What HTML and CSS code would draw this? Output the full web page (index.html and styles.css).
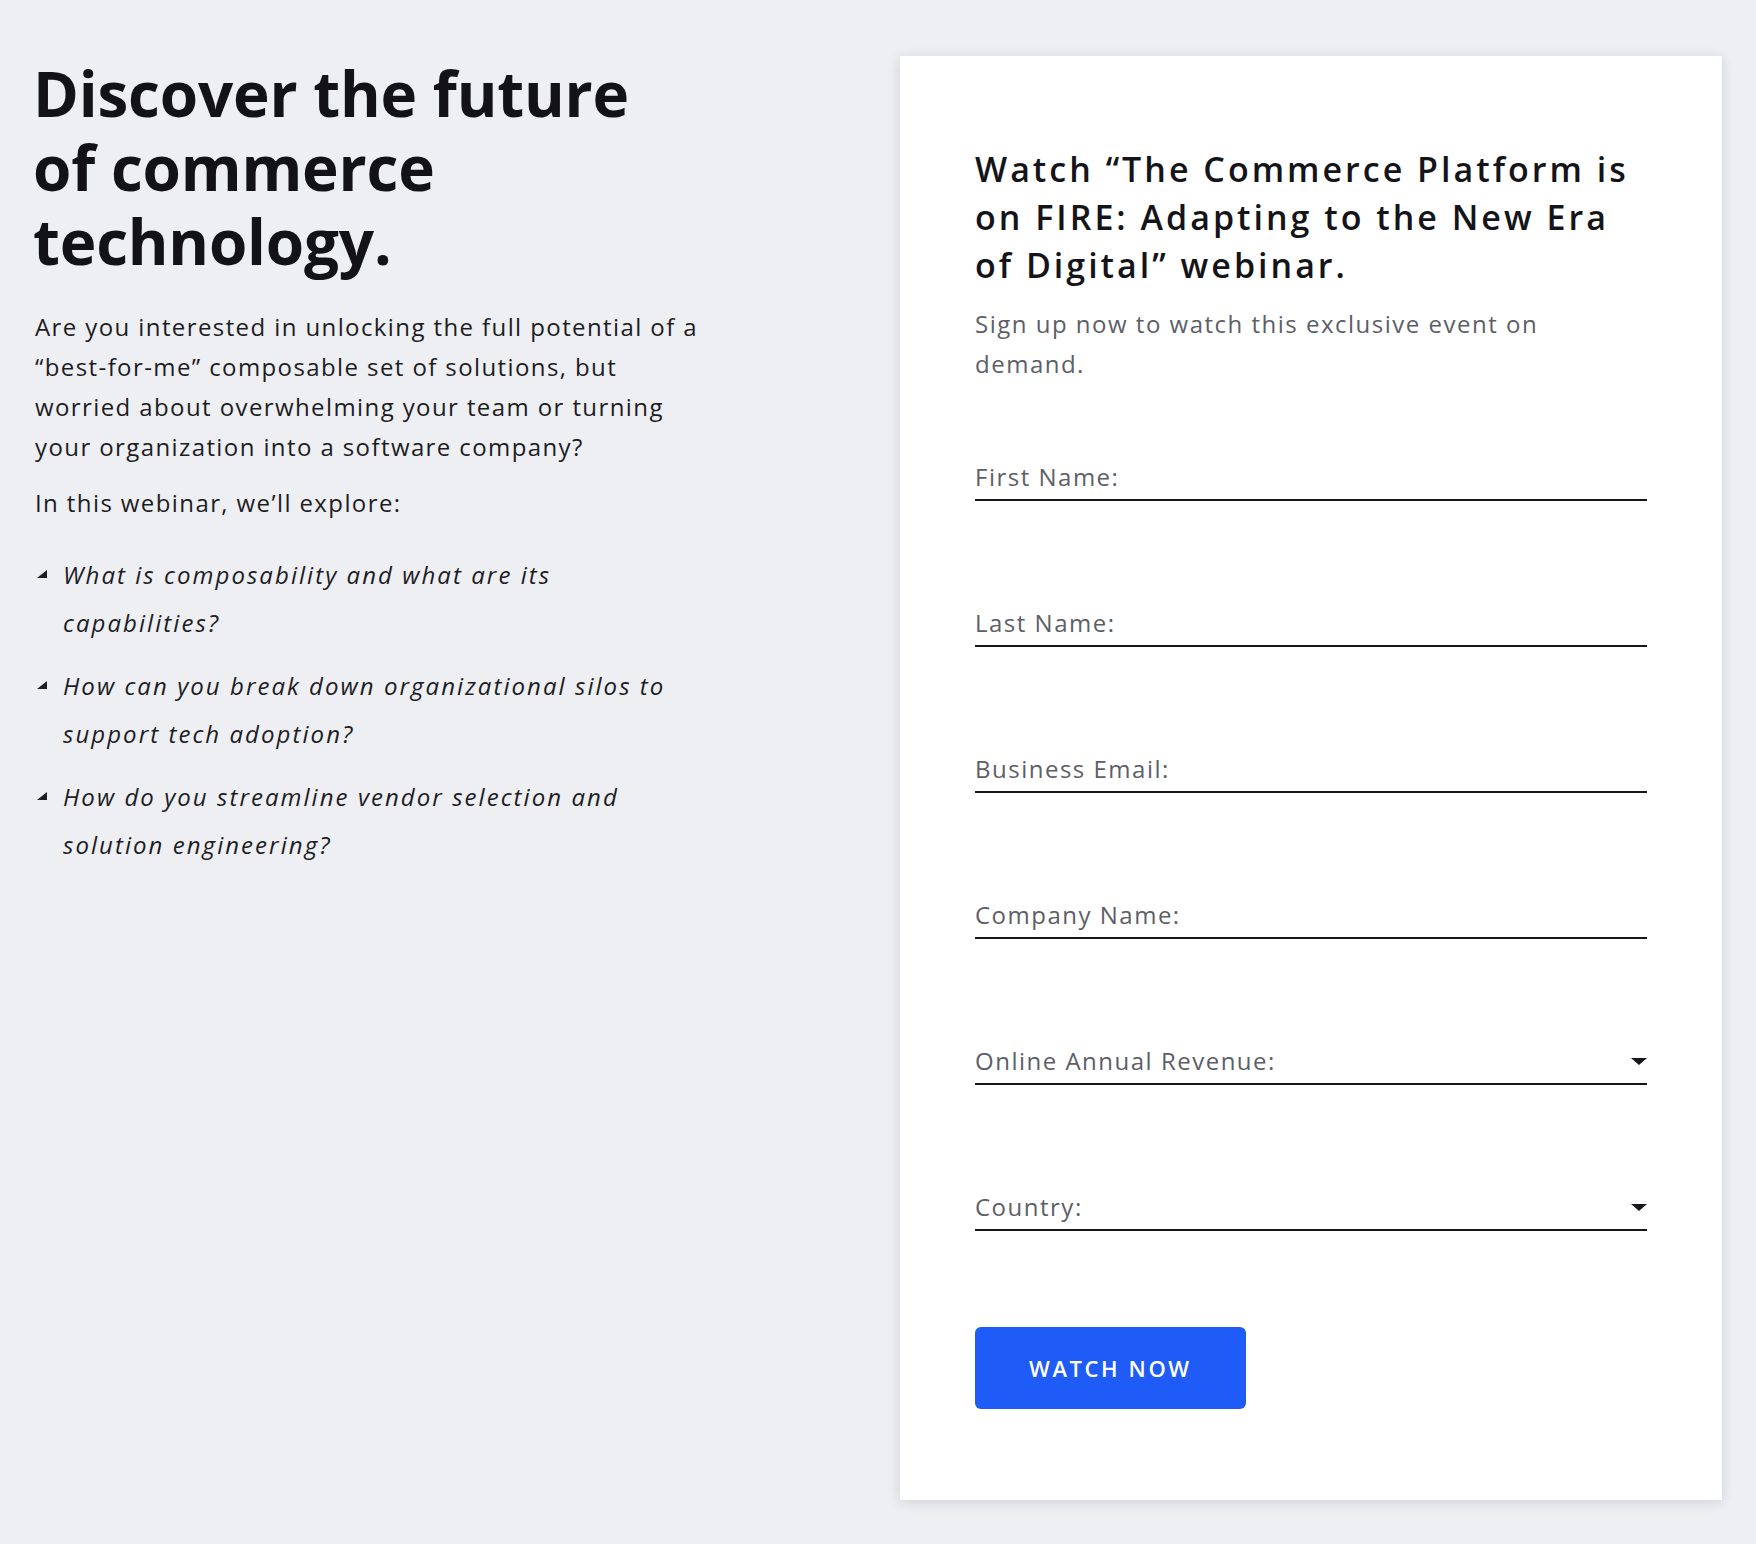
FILE: index.html
```html
<!DOCTYPE html>
<html lang="en">
<head>
<meta charset="utf-8">
<title>Discover the future of commerce technology</title>
<link rel="stylesheet" href="styles.css">
</head>
<body>
<main class="page">
  <section class="intro">
    <h1 class="intro-title">Discover the future of commerce technology.</h1>
    <p class="intro-text">Are you interested in unlocking the full potential of a “best-for-me” composable set of solutions, but worried about overwhelming your team or turning your organization into a software company?</p>
    <p class="intro-text intro-lead">In this webinar, we’ll explore:</p>
    <ul class="topics">
      <li class="topic"><svg class="topic-mark" viewBox="0 0 10 8" aria-hidden="true"><polygon points="10,0 10,8 0,8"/></svg>What is composability and what are its capabilities?</li>
      <li class="topic"><svg class="topic-mark" viewBox="0 0 10 8" aria-hidden="true"><polygon points="10,0 10,8 0,8"/></svg>How can you break down organizational silos to support tech adoption?</li>
      <li class="topic"><svg class="topic-mark" viewBox="0 0 10 8" aria-hidden="true"><polygon points="10,0 10,8 0,8"/></svg>How do you streamline vendor selection and solution engineering?</li>
    </ul>
  </section>

  <section class="card">
    <h2 class="card-title">Watch “The Commerce Platform is on FIRE: Adapting to the New Era of Digital” webinar.</h2>
    <p class="card-sub">Sign up now to watch this exclusive event on demand.</p>
    <form class="form">
      <div class="field"><span class="field-label">First Name:</span></div>
      <div class="field"><span class="field-label">Last Name:</span></div>
      <div class="field"><span class="field-label">Business Email:</span></div>
      <div class="field"><span class="field-label">Company Name:</span></div>
      <div class="field"><span class="field-label">Online Annual Revenue:</span><svg class="caret" viewBox="0 0 16 7" aria-hidden="true"><polygon points="0,0 16,0 8,7"/></svg></div>
      <div class="field"><span class="field-label">Country:</span><svg class="caret" viewBox="0 0 16 7" aria-hidden="true"><polygon points="0,0 16,0 8,7"/></svg></div>
      <button class="cta" type="button">WATCH NOW</button>
    </form>
  </section>
</main>
</body>
</html>
```

FILE: styles.css
```css
* { box-sizing: border-box; }

html, body {
  margin: 0;
  padding: 0;
}

body {
  background: #eeeff3;
  font-family: "Open Sans", "Liberation Sans", sans-serif;
  color: #1d1d24;
}

.page {
  display: grid;
  grid-template-columns: 672px 822px;
  justify-content: space-between;
  align-items: start;
  padding: 56px 34px 43px 35px;
}

/* ---------- left column ---------- */
.intro-title {
  margin: 0 0 0 -2px;
  max-width: 640px;
  font-size: 62px;
  line-height: 74px;
  font-weight: 700;
  color: #121217;
  letter-spacing: -0.2px;
}

.intro-text {
  margin: 29px 0 0;
  font-size: 24px;
  line-height: 40px;
  letter-spacing: 1.4px;
  color: #1d1d24;
}

.intro-lead {
  margin-top: 16px;
}

.topics {
  list-style: none;
  margin: 28px 0 0;
  padding: 0 0 0 28px;
  max-width: 650px;
}

.topic {
  position: relative;
  font-size: 24px;
  line-height: 48px;
  font-style: italic;
  letter-spacing: 2.05px;
  color: #1d1d24;
}

.topic + .topic {
  margin-top: 15px;
}

.topic-mark {
  position: absolute;
  left: -26px;
  top: 19px;
  width: 10px;
  height: 8px;
  fill: #1d1d24;
}

/* ---------- card ---------- */
.card {
  background: #ffffff;
  padding: 89px 75px 91px;
  box-shadow: 0 2px 12px rgba(30, 30, 50, 0.14);
}

.card-title {
  margin: 0;
  font-size: 34px;
  line-height: 48px;
  font-weight: 600;
  letter-spacing: 3px;
  color: #141419;
}

.card-sub {
  margin: 15px 0 0;
  font-size: 24px;
  line-height: 40px;
  letter-spacing: 1.5px;
  color: #5d5e68;
}

.form {
  display: flex;
  flex-direction: column;
  align-items: flex-start;
  margin-top: 78px;
}

.field {
  align-self: stretch;
  display: flex;
  align-items: center;
  justify-content: space-between;
  padding-bottom: 7px;
  border-bottom: 2px solid #16161b;
}

.field + .field {
  margin-top: 107px;
}

.field-label {
  font-size: 24px;
  line-height: 30px;
  letter-spacing: 1.5px;
  color: #5d5e68;
}

.caret {
  width: 16px;
  height: 7px;
  fill: #16161b;
  margin-top: 0;
}

.cta {
  margin-top: 96px;
  height: 82px;
  padding: 0 54px;
  border: none;
  border-radius: 6px;
  background: #1f5bf6;
  color: #ffffff;
  font-family: inherit;
  font-size: 22px;
  font-weight: 600;
  letter-spacing: 2.6px;
  cursor: pointer;
}
```
